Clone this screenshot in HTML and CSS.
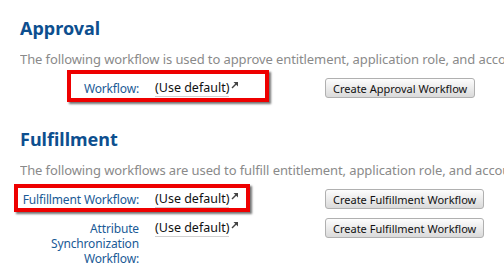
FILE: index.html
```html
<!DOCTYPE html>
<html>
<head>
<meta charset="utf-8">
<link rel="stylesheet" href="styles.css">
</head>
<body>
<div class="page">
  <section class="section">
    <h2 class="title">Approval</h2>
    <p class="desc">The following workflow is used to approve entitlement, application role, and account requests.</p>
    <div class="rows">
      <div class="row">
        <div class="label">Workflow:</div>
        <div class="value"><span class="link">(Use default)</span><svg class="ext" width="8" height="8" viewBox="0 0 8 8"><path d="M1 7 L6 2" stroke="#444" stroke-width="1.4"/><path d="M2.5 1 H7 V5.5 Z" fill="#444"/></svg></div>
        <div class="action"><button class="btn">Create Approval Workflow</button></div>
      </div>
    </div>
  </section>
  <section class="section second">
    <h2 class="title">Fulfillment</h2>
    <p class="desc">The following workflows are used to fulfill entitlement, application role, and account requests.</p>
    <div class="rows">
      <div class="row">
        <div class="label">Fulfillment Workflow:</div>
        <div class="value"><span class="link">(Use default)</span><svg class="ext" width="8" height="8" viewBox="0 0 8 8"><path d="M1 7 L6 2" stroke="#444" stroke-width="1.4"/><path d="M2.5 1 H7 V5.5 Z" fill="#444"/></svg></div>
        <div class="action"><button class="btn">Create Fulfillment Workflow</button></div>
      </div>
      <div class="row">
        <div class="label">Attribute Synchronization Workflow:</div>
        <div class="value"><span class="link">(Use default)</span><svg class="ext" width="8" height="8" viewBox="0 0 8 8"><path d="M1 7 L6 2" stroke="#444" stroke-width="1.4"/><path d="M2.5 1 H7 V5.5 Z" fill="#444"/></svg></div>
        <div class="action"><button class="btn">Create Fulfillment Workflow</button></div>
      </div>
    </div>
  </section>
  <div class="mark mark-approval"></div>
  <div class="mark mark-fulfill"></div>
</div>
</body>
</html>
```

FILE: styles.css
```css
html, body {
  margin: 0;
  padding: 0;
  background: #ffffff;
}
body {
  width: 504px;
  height: 272px;
  overflow: hidden;
  font-family: "Noto Sans", "Open Sans", sans-serif;
}
.page {
  position: relative;
  padding: 16px 0 0 20px;
  overflow: hidden;
}
.section {
  display: flex;
  flex-direction: column;
}
.second {
  margin-top: 29px;
}
.title {
  margin: 0;
  font-size: 18px;
  line-height: 24px;
  font-weight: bold;
  color: #0d4f8f;
}
.desc {
  margin: 10px 0 0 0;
  font-size: 13px;
  line-height: 18px;
  color: #8a8a8a;
  white-space: nowrap;
  overflow: hidden;
  letter-spacing: -0.1px;
}
.rows {
  display: flex;
  flex-direction: column;
  gap: 9px;
  margin: 10px 0 0 -6px;
}
.row {
  display: grid;
  grid-template-columns: 125px 154px auto;
  column-gap: 16px;
  align-items: start;
}
.label {
  text-align: right;
  font-size: 12px;
  line-height: 15px;
  letter-spacing: -0.15px;
  color: #1a5a96;
  padding-top: 3px;
}
.value {
  font-size: 12.5px;
  line-height: 16px;
  color: #111;
  padding-top: 2px;
  display: flex;
  align-items: flex-start;
}
.link {
  border-bottom: 1px solid #d0d0d0;
}
.ext {
  margin-left: 2px;
  margin-top: 1px;
}
.action {
  display: flex;
}
.btn {
  height: 20px;
  padding: 0 7px;
  font-family: "Noto Sans", "Open Sans", sans-serif;
  font-size: 11px;
  color: #111;
  background: linear-gradient(#fdfdfd, #dadada);
  border: 1px solid #b0b0b0;
  border-radius: 3px;
}
.mark {
  position: absolute;
  border: 4px solid #ee0000;
  box-shadow: 2px 2px 2px rgba(0,0,0,0.55);
}
.mark-approval {
  left: 67px;
  top: 70px;
  width: 194px;
  height: 24px;
}
.mark-fulfill {
  left: 14px;
  top: 184px;
  width: 228px;
  height: 20px;
}
```
